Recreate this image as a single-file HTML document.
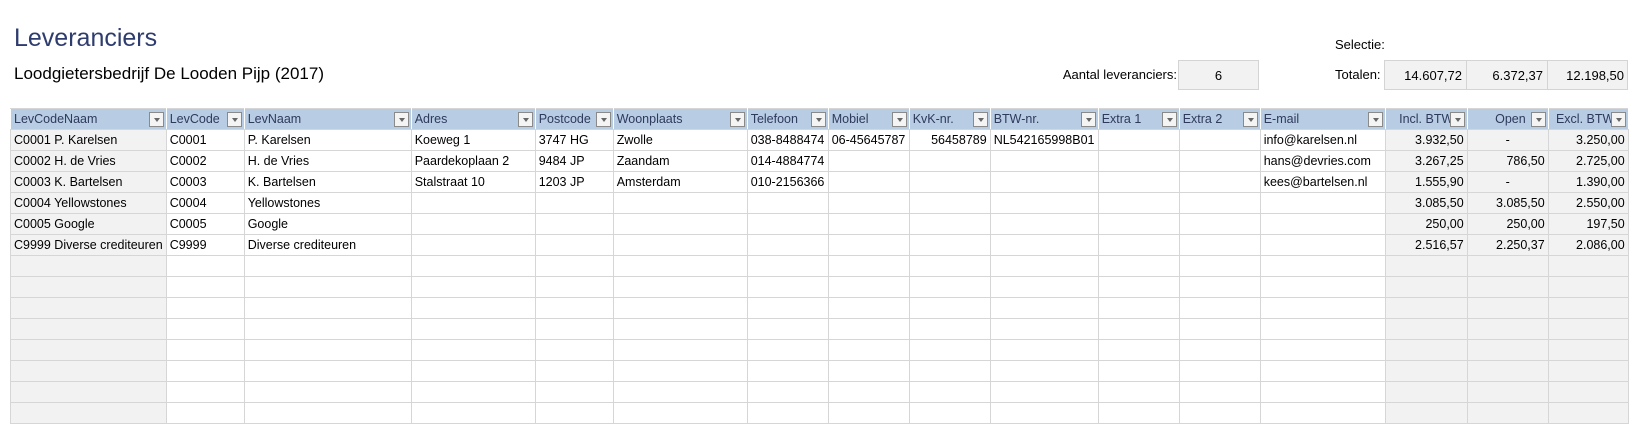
<!DOCTYPE html>
<html><head><meta charset="utf-8"><style>
body{margin:0;width:1638px;height:424px;background:#fff;font-family:"Liberation Sans",sans-serif;position:relative;overflow:hidden}
.t{position:absolute;white-space:nowrap}
.box{position:absolute;background:#f2f2f2;border:1px solid #d4d4d4;box-sizing:border-box;font-size:13px;display:flex;align-items:center}
table{position:absolute;left:10px;top:108px;border-collapse:collapse;table-layout:fixed;font-size:12.5px}
td{border:1px solid #d6d6d6;height:21px;padding:0 3px;white-space:nowrap;overflow:hidden;box-sizing:border-box;color:#000}
tr{height:21px}
tr.h td{background:#b8cce4;color:#2e3a5c;position:relative;border-color:#d6d6d6 #fff #d6d6d6 #fff}
.dd{position:absolute;right:2px;top:3px;width:15px;height:15px;box-sizing:border-box;border:1px solid #8a8a8a;background:#f4f4f4}
.dd:after{content:"";position:absolute;left:4px;top:5px;border-left:3px solid transparent;border-right:3px solid transparent;border-top:4px solid #666}
.g{background:#f2f2f2}
.r{text-align:right}
.c{text-align:center}
</style></head><body>
<div class="t" style="left:14px;top:24px;font-size:25px;color:#2e3c6e">Leveranciers</div>
<div class="t" style="left:14px;top:64px;font-size:17px;color:#000">Loodgietersbedrijf De Looden Pijp (2017)</div>
<div class="t" style="left:1335px;top:37px;font-size:13px">Selectie:</div>
<div class="t" style="right:461px;top:67px;font-size:13px">Aantal leveranciers:</div>
<div class="box" style="left:1178px;top:60px;width:81px;height:30px;justify-content:center">6</div>
<div class="t" style="left:1335px;top:67px;font-size:13px">Totalen:</div>
<div class="box" style="left:1384px;top:60px;width:83px;height:30px;justify-content:flex-end;padding-right:4px">14.607,72</div>
<div class="box" style="left:1466px;top:60px;width:82px;height:30px;justify-content:flex-end;padding-right:4px">6.372,37</div>
<div class="box" style="left:1547px;top:60px;width:81px;height:30px;justify-content:flex-end;padding-right:3px">12.198,50</div>
<table>
<colgroup><col style="width:155px"><col style="width:78px"><col style="width:167px"><col style="width:124px"><col style="width:78px"><col style="width:134px"><col style="width:81px"><col style="width:81px"><col style="width:81px"><col style="width:108px"><col style="width:81px"><col style="width:81px"><col style="width:125px"><col style="width:82px"><col style="width:81px"><col style="width:80px"></colgroup>
<tr class="h"><td>LevCodeNaam<span class="dd"></span></td><td>LevCode<span class="dd"></span></td><td>LevNaam<span class="dd"></span></td><td>Adres<span class="dd"></span></td><td>Postcode<span class="dd"></span></td><td>Woonplaats<span class="dd"></span></td><td>Telefoon<span class="dd"></span></td><td>Mobiel<span class="dd"></span></td><td>KvK-nr.<span class="dd"></span></td><td>BTW-nr.<span class="dd"></span></td><td>Extra 1<span class="dd"></span></td><td>Extra 2<span class="dd"></span></td><td>E-mail<span class="dd"></span></td><td class="r" style="padding-right:3px">Incl. BTW&nbsp;&nbsp;&nbsp;<span class="dd"></span></td><td class="r" style="padding-right:22px">Open<span class="dd"></span></td><td class="r">Excl. BTW&nbsp;&nbsp;&nbsp;<span class="dd"></span></td></tr>
<tr><td class="g">C0001 P. Karelsen</td><td>C0001</td><td>P. Karelsen</td><td>Koeweg 1</td><td>3747 HG</td><td>Zwolle</td><td>038-8488474</td><td>06-45645787</td><td class="r">56458789</td><td>NL542165998B01</td><td></td><td></td><td>info@karelsen.nl</td><td class="g r">3.932,50</td><td class="g c">-</td><td class="g r">3.250,00</td></tr>
<tr><td class="g">C0002 H. de Vries</td><td>C0002</td><td>H. de Vries</td><td>Paardekoplaan 2</td><td>9484 JP</td><td>Zaandam</td><td>014-4884774</td><td></td><td></td><td></td><td></td><td></td><td>hans@devries.com</td><td class="g r">3.267,25</td><td class="g r">786,50</td><td class="g r">2.725,00</td></tr>
<tr><td class="g">C0003 K. Bartelsen</td><td>C0003</td><td>K. Bartelsen</td><td>Stalstraat 10</td><td>1203 JP</td><td>Amsterdam</td><td>010-2156366</td><td></td><td></td><td></td><td></td><td></td><td>kees@bartelsen.nl</td><td class="g r">1.555,90</td><td class="g c">-</td><td class="g r">1.390,00</td></tr>
<tr><td class="g">C0004 Yellowstones</td><td>C0004</td><td>Yellowstones</td><td></td><td></td><td></td><td></td><td></td><td></td><td></td><td></td><td></td><td></td><td class="g r">3.085,50</td><td class="g r">3.085,50</td><td class="g r">2.550,00</td></tr>
<tr><td class="g">C0005 Google</td><td>C0005</td><td>Google</td><td></td><td></td><td></td><td></td><td></td><td></td><td></td><td></td><td></td><td></td><td class="g r">250,00</td><td class="g r">250,00</td><td class="g r">197,50</td></tr>
<tr><td class="g">C9999 Diverse crediteuren</td><td>C9999</td><td>Diverse crediteuren</td><td></td><td></td><td></td><td></td><td></td><td></td><td></td><td></td><td></td><td></td><td class="g r">2.516,57</td><td class="g r">2.250,37</td><td class="g r">2.086,00</td></tr>
<tr><td class="g"></td><td></td><td></td><td></td><td></td><td></td><td></td><td></td><td></td><td></td><td></td><td></td><td></td><td class="g"></td><td class="g"></td><td class="g"></td></tr>
<tr><td class="g"></td><td></td><td></td><td></td><td></td><td></td><td></td><td></td><td></td><td></td><td></td><td></td><td></td><td class="g"></td><td class="g"></td><td class="g"></td></tr>
<tr><td class="g"></td><td></td><td></td><td></td><td></td><td></td><td></td><td></td><td></td><td></td><td></td><td></td><td></td><td class="g"></td><td class="g"></td><td class="g"></td></tr>
<tr><td class="g"></td><td></td><td></td><td></td><td></td><td></td><td></td><td></td><td></td><td></td><td></td><td></td><td></td><td class="g"></td><td class="g"></td><td class="g"></td></tr>
<tr><td class="g"></td><td></td><td></td><td></td><td></td><td></td><td></td><td></td><td></td><td></td><td></td><td></td><td></td><td class="g"></td><td class="g"></td><td class="g"></td></tr>
<tr><td class="g"></td><td></td><td></td><td></td><td></td><td></td><td></td><td></td><td></td><td></td><td></td><td></td><td></td><td class="g"></td><td class="g"></td><td class="g"></td></tr>
<tr><td class="g"></td><td></td><td></td><td></td><td></td><td></td><td></td><td></td><td></td><td></td><td></td><td></td><td></td><td class="g"></td><td class="g"></td><td class="g"></td></tr>
<tr><td class="g"></td><td></td><td></td><td></td><td></td><td></td><td></td><td></td><td></td><td></td><td></td><td></td><td></td><td class="g"></td><td class="g"></td><td class="g"></td></tr>
</table>
</body></html>
